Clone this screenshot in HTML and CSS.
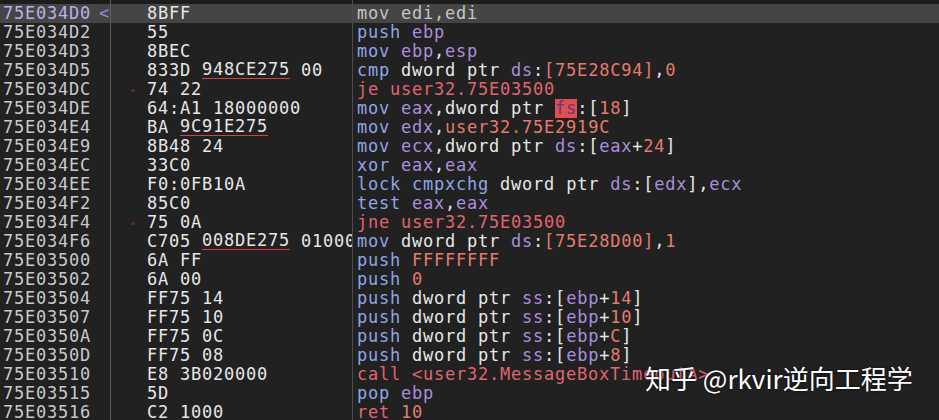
FILE: index.html
```html
<!DOCTYPE html>
<html lang="en">
<head>
    <meta charset="UTF-8">
    <title>CPU - user32.dll</title>
    <link rel="stylesheet" href="styles.css">
</head>
<body>
    <div class="disasm">
        <div class="row top-strip"><span class="addr"></span><span class="bytes"></span><span class="code"></span></div>

        <div class="row current">
            <span class="addr">75E034D0<span class="cip">&lt;</span></span>
            <span class="bytes"><span class="jmp"></span>8BFF</span>
            <span class="code">mov edi,edi</span>
        </div>
        <div class="row">
            <span class="addr">75E034D2</span>
            <span class="bytes"><span class="jmp"></span>55</span>
            <span class="code"><i class="op">push</i> <i class="reg">ebp</i></span>
        </div>
        <div class="row">
            <span class="addr">75E034D3</span>
            <span class="bytes"><span class="jmp"></span>8BEC</span>
            <span class="code"><i class="op">mov</i> <i class="reg">ebp</i>,<i class="reg">esp</i></span>
        </div>
        <div class="row">
            <span class="addr">75E034D5</span>
            <span class="bytes"><span class="jmp"></span>833D <u>948CE275</u> 00</span>
            <span class="code"><i class="op">cmp</i> dword ptr <i class="reg">ds</i>:<i class="num">[75E28C94]</i>,<i class="num">0</i></span>
        </div>
        <div class="row">
            <span class="addr">75E034DC</span>
            <span class="bytes"><span class="jmp"><span class="mark"></span></span>74 22</span>
            <span class="code"><i class="jcc">je user32.75E03500</i></span>
        </div>
        <div class="row">
            <span class="addr">75E034DE</span>
            <span class="bytes"><span class="jmp"></span>64:A1 18000000</span>
            <span class="code"><i class="op">mov</i> <i class="reg">eax</i>,dword ptr <i class="seg">fs</i>:[<i class="num">18</i>]</span>
        </div>
        <div class="row">
            <span class="addr">75E034E4</span>
            <span class="bytes"><span class="jmp"></span>BA <u>9C91E275</u></span>
            <span class="code"><i class="op">mov</i> <i class="reg">edx</i>,<i class="num">user32.75E2919C</i></span>
        </div>
        <div class="row">
            <span class="addr">75E034E9</span>
            <span class="bytes"><span class="jmp"></span>8B48 24</span>
            <span class="code"><i class="op">mov</i> <i class="reg">ecx</i>,dword ptr <i class="reg">ds</i>:[<i class="reg">eax</i>+<i class="num">24</i>]</span>
        </div>
        <div class="row">
            <span class="addr">75E034EC</span>
            <span class="bytes"><span class="jmp"></span>33C0</span>
            <span class="code"><i class="op">xor</i> <i class="reg">eax</i>,<i class="reg">eax</i></span>
        </div>
        <div class="row">
            <span class="addr">75E034EE</span>
            <span class="bytes"><span class="jmp"></span>F0:0FB10A</span>
            <span class="code"><i class="op">lock</i> <i class="op">cmpxchg</i> dword ptr <i class="reg">ds</i>:[<i class="reg">edx</i>],<i class="reg">ecx</i></span>
        </div>
        <div class="row">
            <span class="addr">75E034F2</span>
            <span class="bytes"><span class="jmp"></span>85C0</span>
            <span class="code"><i class="op">test</i> <i class="reg">eax</i>,<i class="reg">eax</i></span>
        </div>
        <div class="row">
            <span class="addr">75E034F4</span>
            <span class="bytes"><span class="jmp"><span class="mark"></span></span>75 0A</span>
            <span class="code"><i class="jcc">jne user32.75E03500</i></span>
        </div>
        <div class="row">
            <span class="addr">75E034F6</span>
            <span class="bytes"><span class="jmp"></span>C705 <u>008DE275</u> 01000000</span>
            <span class="code"><i class="op">mov</i> dword ptr <i class="reg">ds</i>:<i class="num">[75E28D00]</i>,<i class="num">1</i></span>
        </div>
        <div class="row">
            <span class="addr">75E03500</span>
            <span class="bytes"><span class="jmp"></span>6A FF</span>
            <span class="code"><i class="op">push</i> <i class="num">FFFFFFFF</i></span>
        </div>
        <div class="row">
            <span class="addr">75E03502</span>
            <span class="bytes"><span class="jmp"></span>6A 00</span>
            <span class="code"><i class="op">push</i> <i class="num">0</i></span>
        </div>
        <div class="row">
            <span class="addr">75E03504</span>
            <span class="bytes"><span class="jmp"></span>FF75 14</span>
            <span class="code"><i class="op">push</i> dword ptr <i class="reg">ss</i>:[<i class="reg">ebp</i>+<i class="num">14</i>]</span>
        </div>
        <div class="row">
            <span class="addr">75E03507</span>
            <span class="bytes"><span class="jmp"></span>FF75 10</span>
            <span class="code"><i class="op">push</i> dword ptr <i class="reg">ss</i>:[<i class="reg">ebp</i>+<i class="num">10</i>]</span>
        </div>
        <div class="row">
            <span class="addr">75E0350A</span>
            <span class="bytes"><span class="jmp"></span>FF75 0C</span>
            <span class="code"><i class="op">push</i> dword ptr <i class="reg">ss</i>:[<i class="reg">ebp</i>+<i class="num">C</i>]</span>
        </div>
        <div class="row">
            <span class="addr">75E0350D</span>
            <span class="bytes"><span class="jmp"></span>FF75 08</span>
            <span class="code"><i class="op">push</i> dword ptr <i class="reg">ss</i>:[<i class="reg">ebp</i>+<i class="num">8</i>]</span>
        </div>
        <div class="row">
            <span class="addr">75E03510</span>
            <span class="bytes"><span class="jmp"></span>E8 3B020000</span>
            <span class="code"><i class="jcc">call &lt;user32.MessageBoxTimeoutA&gt;</i></span>
        </div>
        <div class="row">
            <span class="addr">75E03515</span>
            <span class="bytes"><span class="jmp"></span>5D</span>
            <span class="code"><i class="op">pop</i> <i class="reg">ebp</i></span>
        </div>
        <div class="row">
            <span class="addr">75E03516</span>
            <span class="bytes"><span class="jmp"></span>C2 1000</span>
            <span class="code"><i class="jcc">ret</i> <i class="num">10</i></span>
        </div>
    </div>

    <div class="watermark">知乎 @rkvir逆向工程学</div>
</body>
</html>
```

FILE: styles.css
```css
body {
    margin: 0;
    background-color: #212121;
    overflow: hidden;
    height: 420px;
    position: relative;
}

.disasm {
    font-family: "DejaVu Sans Mono", "Liberation Mono", monospace;
    font-size: 17px;
    letter-spacing: 0.77px;
    color: #e6e6e6;
}

.row {
    display: grid;
    grid-template-columns: 110px 242px 1fr;
    height: 19px;
    line-height: 19px;
    white-space: nowrap;
}

.row > span {
    overflow: hidden;
}

.top-strip {
    height: 4px;
    background-color: #1c1c1c;
}

.addr {
    padding-left: 3px;
    color: #c9c9c9;
    position: relative;
}

.bytes {
    border-left: 1px solid #5c5c5c;
}

.code {
    border-left: 1px solid #4c4c4c;
    padding-left: 4px;
}

.jmp {
    display: inline-block;
    width: 36px;
    height: 19px;
    vertical-align: top;
    position: relative;
}

.mark {
    position: absolute;
    left: 20px;
    top: 9px;
    width: 4px;
    height: 3px;
    border-radius: 2px;
    background-color: #6a2530;
}

.current {
    background-color: #454545;
}

.current .addr {
    color: #b9b1e6;
}

.current .code {
    color: #c4c4c4;
}

.cip {
    position: absolute;
    left: 99px;
    color: #9b86dc;
}

.bytes u {
    text-decoration: none;
    border-bottom: 1px solid #d5403f;
    line-height: 16px;
    height: 17px;
    display: inline-block;
    vertical-align: top;
}

i {
    font-style: normal;
}

.op {
    color: #8ea6e6;
}

.reg {
    color: #a98edc;
}

.num {
    color: #e37c6c;
}

.jcc {
    color: #e06470;
}

.seg {
    background-color: #e04e50;
    color: #5b3a86;
}

.watermark {
    position: absolute;
    left: 645px;
    top: 359px;
    font-family: "Noto Sans CJK SC", sans-serif;
    font-size: 26px;
    color: #ffffff;
    text-shadow: 0 0 3px rgba(0, 0, 0, 0.8);
    white-space: nowrap;
}
```
